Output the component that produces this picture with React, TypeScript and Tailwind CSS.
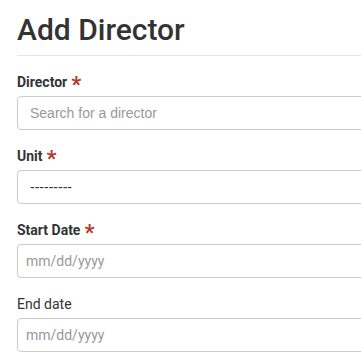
import { useState } from "react";

const font = { fontFamily: "Roboto, 'Liberation Sans', sans-serif" };

const Star = () => <span className="ml-[4px] text-[22px] leading-none text-[#b23a2c] align-[-5px]">*</span>;

interface FieldProps {
  label: string;
  required?: boolean;
  children: React.ReactNode;
}

const Field = ({ label, required, children }: FieldProps) => (
  <div className="mb-4">
    <label className={`block h-[21px] text-[14px] leading-[21px] text-[#333] ${required ? "font-bold" : "font-normal"}`}>
      {label}
      {required && <Star />}
    </label>
    <div className="mt-[3px]">{children}</div>
  </div>
);

const inputCls =
  "block w-full h-[34px] rounded-[4px] border border-[#ccc] bg-white text-[14px] text-[#333] placeholder:text-[#999] outline-none";

export default function App() {
  const [unit, setUnit] = useState("");

  return (
    <div className="w-[361px] h-[362px] overflow-hidden bg-white" style={font}>
      <div className="w-[440px] pl-[17px] pt-[12px]">
        <h1 className="text-[30px] leading-[36px] font-medium text-[#333] pb-[7px] border-b border-[#e5e5e5]">
          Add Director
        </h1>
        <form className="mt-4">
          <Field label="Director" required>
            <input className={`${inputCls} px-3 font-['Liberation_Sans',Arial,sans-serif]`} placeholder="Search for a director" />
          </Field>
          <Field label="Unit" required>
            <select
              value={unit}
              onChange={(e) => setUnit(e.target.value)}
              className={`${inputCls} px-3 appearance-none font-['Liberation_Sans',Arial,sans-serif]`}
            >
              <option value="">---------</option>
            </select>
          </Field>
          <Field label="Start Date" required>
            <input className={`${inputCls} px-2`} placeholder="mm/dd/yyyy" />
          </Field>
          <Field label="End date">
            <input className={`${inputCls} px-2`} placeholder="mm/dd/yyyy" />
          </Field>
        </form>
      </div>
    </div>
  );
}
